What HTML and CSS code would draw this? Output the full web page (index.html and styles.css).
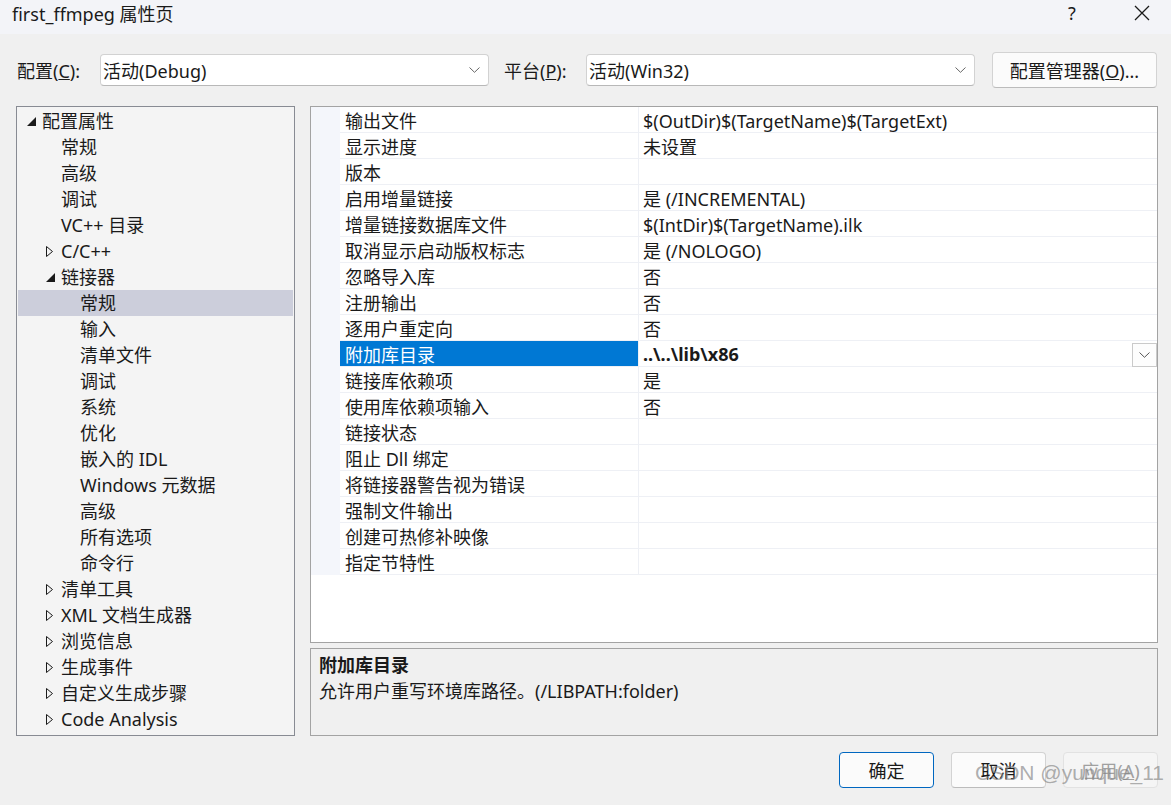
FILE: index.html
```html
<!DOCTYPE html>
<html lang="zh-CN">
<head>
    <meta charset="UTF-8">
    <title>first_ffmpeg 属性页</title>
    <link rel="stylesheet" href="styles.css">
</head>
<body>

<div class="window">
    <div class="titlebar">
        <span class="title">first_ffmpeg 属性页</span>
        <span class="title-btn">?</span>
        <span class="title-btn close">
            <svg width="16" height="16" viewBox="0 0 16 16"><path d="M1 1 L15 15 M15 1 L1 15" stroke="#1a1a1a" stroke-width="1.3" fill="none"/></svg>
        </span>
    </div>

    <div class="dialog">
        <div class="config-row">
            <label class="lbl lbl-config">配置(<u>C</u>):</label>
            <div class="combo">
                <span>活动(Debug)</span>
                <svg class="chev" width="11" height="6" viewBox="0 0 11 6"><polyline points="0.5,0.5 5.5,5.3 10.5,0.5" stroke="#666" fill="none"/></svg>
            </div>
            <label class="lbl lbl-platform">平台(<u>P</u>):</label>
            <div class="combo">
                <span>活动(Win32)</span>
                <svg class="chev" width="11" height="6" viewBox="0 0 11 6"><polyline points="0.5,0.5 5.5,5.3 10.5,0.5" stroke="#666" fill="none"/></svg>
            </div>
            <button class="btn btn-manager">配置管理器(<u>O</u>)...</button>
        </div>

        <div class="main">
            <div class="tree">
                <div class="node lv0"><span class="arrow"><svg width="9" height="9" viewBox="0 0 9 9"><polygon points="9,0 9,9 0,9" fill="#1a1a1a"/></svg></span>配置属性</div>
                <div class="node lv1"><span class="arrow"></span>常规</div>
                <div class="node lv1"><span class="arrow"></span>高级</div>
                <div class="node lv1"><span class="arrow"></span>调试</div>
                <div class="node lv1"><span class="arrow"></span>VC++ 目录</div>
                <div class="node lv1"><span class="arrow"><svg width="8" height="11" viewBox="0 0 8 11"><polygon points="0.5,0.5 6.5,5.5 0.5,10.5" fill="none" stroke="#1a1a1a"/></svg></span>C/C++</div>
                <div class="node lv1"><span class="arrow"><svg width="9" height="9" viewBox="0 0 9 9"><polygon points="9,0 9,9 0,9" fill="#1a1a1a"/></svg></span>链接器</div>
                <div class="node lv2 selected"><span class="arrow"></span>常规</div>
                <div class="node lv2"><span class="arrow"></span>输入</div>
                <div class="node lv2"><span class="arrow"></span>清单文件</div>
                <div class="node lv2"><span class="arrow"></span>调试</div>
                <div class="node lv2"><span class="arrow"></span>系统</div>
                <div class="node lv2"><span class="arrow"></span>优化</div>
                <div class="node lv2"><span class="arrow"></span>嵌入的 IDL</div>
                <div class="node lv2"><span class="arrow"></span>Windows 元数据</div>
                <div class="node lv2"><span class="arrow"></span>高级</div>
                <div class="node lv2"><span class="arrow"></span>所有选项</div>
                <div class="node lv2"><span class="arrow"></span>命令行</div>
                <div class="node lv1"><span class="arrow"><svg width="8" height="11" viewBox="0 0 8 11"><polygon points="0.5,0.5 6.5,5.5 0.5,10.5" fill="none" stroke="#1a1a1a"/></svg></span>清单工具</div>
                <div class="node lv1"><span class="arrow"><svg width="8" height="11" viewBox="0 0 8 11"><polygon points="0.5,0.5 6.5,5.5 0.5,10.5" fill="none" stroke="#1a1a1a"/></svg></span>XML 文档生成器</div>
                <div class="node lv1"><span class="arrow"><svg width="8" height="11" viewBox="0 0 8 11"><polygon points="0.5,0.5 6.5,5.5 0.5,10.5" fill="none" stroke="#1a1a1a"/></svg></span>浏览信息</div>
                <div class="node lv1"><span class="arrow"><svg width="8" height="11" viewBox="0 0 8 11"><polygon points="0.5,0.5 6.5,5.5 0.5,10.5" fill="none" stroke="#1a1a1a"/></svg></span>生成事件</div>
                <div class="node lv1"><span class="arrow"><svg width="8" height="11" viewBox="0 0 8 11"><polygon points="0.5,0.5 6.5,5.5 0.5,10.5" fill="none" stroke="#1a1a1a"/></svg></span>自定义生成步骤</div>
                <div class="node lv1"><span class="arrow"><svg width="8" height="11" viewBox="0 0 8 11"><polygon points="0.5,0.5 6.5,5.5 0.5,10.5" fill="none" stroke="#1a1a1a"/></svg></span>Code Analysis</div>
            </div>

            <div class="right">
                <div class="grid">
                    <div class="row"><div class="gutter"></div><div class="name">输出文件</div><div class="value">$(OutDir)$(TargetName)$(TargetExt)</div></div>
                    <div class="row"><div class="gutter"></div><div class="name">显示进度</div><div class="value">未设置</div></div>
                    <div class="row"><div class="gutter"></div><div class="name">版本</div><div class="value"></div></div>
                    <div class="row"><div class="gutter"></div><div class="name">启用增量链接</div><div class="value">是 (/INCREMENTAL)</div></div>
                    <div class="row"><div class="gutter"></div><div class="name">增量链接数据库文件</div><div class="value">$(IntDir)$(TargetName).ilk</div></div>
                    <div class="row"><div class="gutter"></div><div class="name">取消显示启动版权标志</div><div class="value">是 (/NOLOGO)</div></div>
                    <div class="row"><div class="gutter"></div><div class="name">忽略导入库</div><div class="value">否</div></div>
                    <div class="row"><div class="gutter"></div><div class="name">注册输出</div><div class="value">否</div></div>
                    <div class="row"><div class="gutter"></div><div class="name">逐用户重定向</div><div class="value">否</div></div>
                    <div class="row active">
                        <div class="gutter"></div>
                        <div class="name">附加库目录</div>
                        <div class="value">
                            <span>..\..\lib\x86</span>
                            <span class="drop">
                                <svg width="11" height="6" viewBox="0 0 11 6"><polyline points="0.5,0.5 5.5,5.3 10.5,0.5" stroke="#555" fill="none"/></svg>
                            </span>
                        </div>
                    </div>
                    <div class="row"><div class="gutter"></div><div class="name">链接库依赖项</div><div class="value">是</div></div>
                    <div class="row"><div class="gutter"></div><div class="name">使用库依赖项输入</div><div class="value">否</div></div>
                    <div class="row"><div class="gutter"></div><div class="name">链接状态</div><div class="value"></div></div>
                    <div class="row"><div class="gutter"></div><div class="name">阻止 Dll 绑定</div><div class="value"></div></div>
                    <div class="row"><div class="gutter"></div><div class="name">将链接器警告视为错误</div><div class="value"></div></div>
                    <div class="row"><div class="gutter"></div><div class="name">强制文件输出</div><div class="value"></div></div>
                    <div class="row"><div class="gutter"></div><div class="name">创建可热修补映像</div><div class="value"></div></div>
                    <div class="row"><div class="gutter"></div><div class="name">指定节特性</div><div class="value"></div></div>
                </div>
                <div class="desc">
                    <div class="desc-title">附加库目录</div>
                    <div class="desc-text">允许用户重写环境库路径。(/LIBPATH:folder)</div>
                </div>
            </div>
        </div>

        <div class="footer">
            <button class="btn btn-ok">确定</button>
            <button class="btn">取消</button>
            <button class="btn btn-disabled">应用(<u>A</u>)</button>
        </div>
    </div>

    <div class="watermark">CSDN @yunque_11</div>
</div>

</body>
</html>
```

FILE: styles.css
```css
body {
    margin: 0;
    background-color: #f0f0f0;
    font-family: "Noto Sans", "Noto Sans CJK SC", sans-serif;
    font-size: 18px;
    color: #1a1a1a;
}
.window {
    position: relative;
    width: 1171px;
    height: 805px;
    overflow: hidden;
}
.titlebar {
    height: 34px;
    background-color: #f3f4f8;
    display: flex;
    align-items: center;
    padding-left: 12px;
}
.titlebar .title {
    flex: 1;
    margin-top: -8px;
}
.title-btn {
    width: 46px;
    display: flex;
    justify-content: center;
    margin-top: -8px;
}
.title-btn.close {
    margin-left: 24px;
    margin-right: 6px;
}
.dialog {
    padding: 0 13px 0 16px;
}
.config-row {
    display: flex;
    align-items: center;
    height: 36px;
    margin-top: 18px;
}
.lbl {
    box-sizing: border-box;
    white-space: nowrap;
}
.lbl-config {
    width: 84px;
    padding-left: 1px;
}
.lbl-platform {
    width: 97px;
    padding-left: 15px;
}
.combo {
    box-sizing: border-box;
    width: 389px;
    height: 32px;
    background-color: #fff;
    border: 1px solid #d2d2d2;
    border-bottom-color: #b8b8b8;
    border-radius: 4px;
    display: flex;
    align-items: center;
    padding: 0 8px 0 2px;
}
.combo span {
    flex: 1;
}
.btn {
    box-sizing: border-box;
    height: 36px;
    width: 95px;
    background-color: #fbfbfb;
    border: 1px solid #d3d3d3;
    border-bottom-color: #bcbcbc;
    border-radius: 4px;
    font-family: inherit;
    font-size: 18px;
    color: #1a1a1a;
    padding: 0;
}
.btn-manager {
    width: 165px;
    margin-left: 17px;
}
.main {
    display: flex;
    gap: 15px;
    height: 630px;
    margin-top: 18px;
}
.tree {
    box-sizing: border-box;
    width: 279px;
    border: 1px solid #888b93;
    background-color: #f4f4f4;
    padding: 1px;
}
.node {
    height: 26px;
    line-height: 26px;
    display: flex;
    align-items: center;
    white-space: nowrap;
}
.node .arrow {
    width: 15px;
    height: 26px;
    display: flex;
    align-items: center;
}
.node.lv0 { padding-left: 9px; }
.node.lv1 { padding-left: 28px; }
.node.lv2 { padding-left: 47px; }
.node.selected {
    background-color: #cccedb;
}
.right {
    width: 848px;
    display: flex;
    flex-direction: column;
    gap: 5px;
}
.grid {
    box-sizing: border-box;
    height: 537px;
    border: 1px solid #a3a3a3;
    background-color: #fff;
}
.row {
    display: grid;
    grid-template-columns: 29px 298px 1fr;
    height: 26px;
}
.row .gutter {
    background-color: #f4f6fb;
}
.row .name, .row .value {
    box-sizing: border-box;
    height: 26px;
    line-height: 29px;
    padding-left: 5px;
    border-bottom: 1px solid #eef0f5;
    white-space: nowrap;
}
.row .value {
    border-left: 1px solid #eef0f5;
    padding-left: 4px;
}
.row.active .name {
    background-color: #0078d4;
    color: #fff;
}
.row.active .value {
    display: flex;
    align-items: center;
    padding-top: 2px;
    line-height: 23px;
    font-weight: bold;
}
.row.active .value span:first-child {
    flex: 1;
}
.drop {
    box-sizing: border-box;
    width: 25px;
    height: 24px;
    border: 1px solid #cacaca;
    background-color: #fdfdfd;
    display: flex;
    align-items: center;
    justify-content: center;
}
.desc {
    box-sizing: border-box;
    height: 88px;
    border: 1px solid #a3a3a3;
    background-color: #f0f0f0;
    padding: 3px 8px;
    line-height: 26px;
}
.desc-title {
    font-weight: bold;
}
.footer {
    display: flex;
    justify-content: flex-end;
    gap: 17px;
    margin-top: 16px;
}
.btn-ok {
    border: 1px solid #0067c0;
}
.btn-disabled {
    background-color: #f5f5f5;
    border-color: #e2e2e2;
    color: #a0a0a0;
}
.watermark {
    position: absolute;
    left: 975px;
    top: 761px;
    font-family: "Liberation Sans", sans-serif;
    font-size: 21px;
    color: rgba(130, 130, 130, 0.65);
    white-space: nowrap;
}
```
